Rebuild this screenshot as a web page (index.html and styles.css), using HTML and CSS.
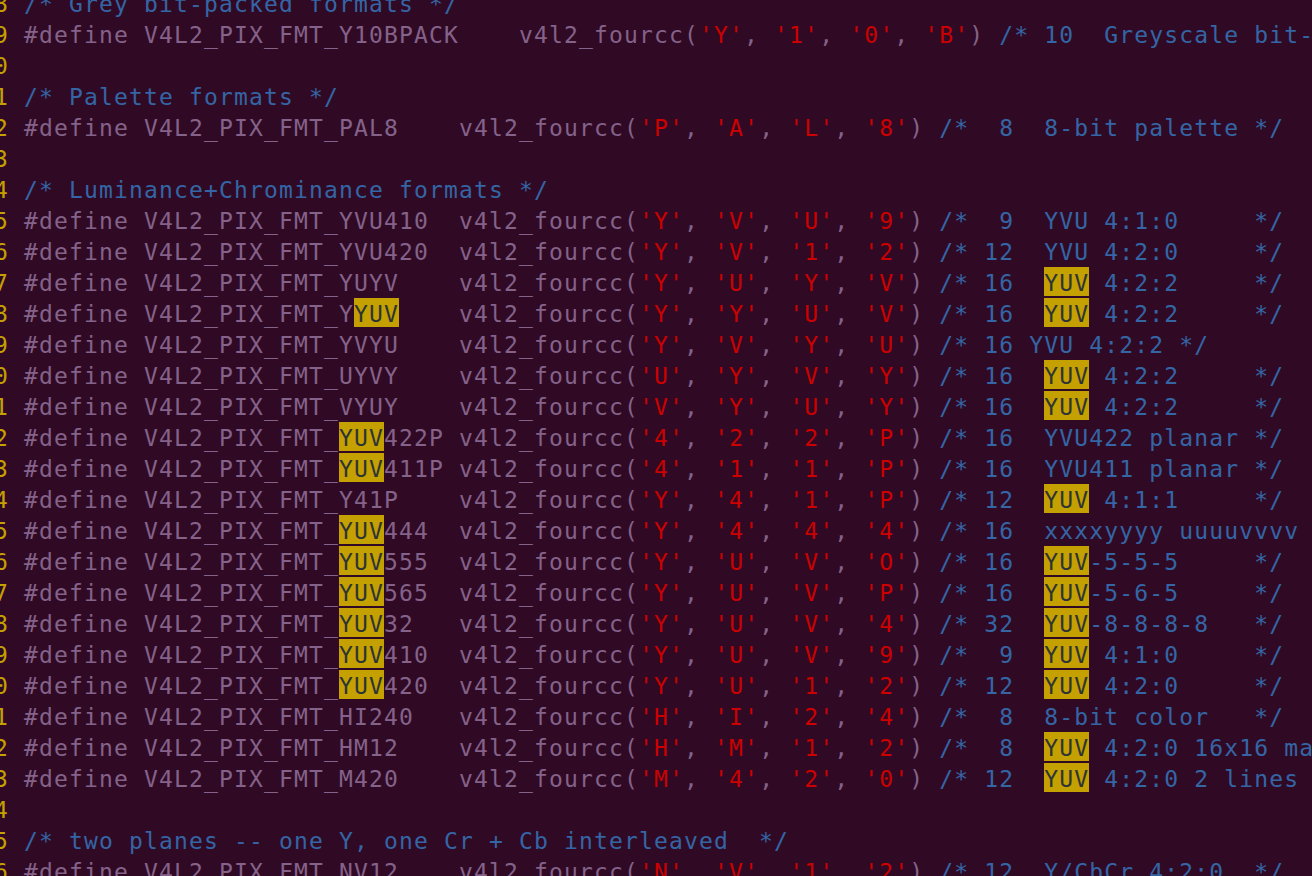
FILE: index.html
```html
<!DOCTYPE html>
<html>
<head>
<meta charset="utf-8">
<link rel="stylesheet" href="styles.css">
</head>
<body>
<main class="editor">
<div class="l"><span class="n">8</span> <span class="c">/* Grey bit-packed formats */</span></div>
<div class="l"><span class="n">9</span> #define V4L2_PIX_FMT_Y10BPACK    v4l2_fourcc(<span class="s">'Y'</span>, <span class="s">'1'</span>, <span class="s">'0'</span>, <span class="s">'B'</span>) <span class="c">/* 10  Greyscale bit-packed */</span></div>
<div class="l"><span class="n">0</span></div>
<div class="l"><span class="n">1</span> <span class="c">/* Palette formats */</span></div>
<div class="l"><span class="n">2</span> #define V4L2_PIX_FMT_PAL8    v4l2_fourcc(<span class="s">'P'</span>, <span class="s">'A'</span>, <span class="s">'L'</span>, <span class="s">'8'</span>) <span class="c">/*  8  8-bit palette */</span></div>
<div class="l"><span class="n">3</span></div>
<div class="l"><span class="n">4</span> <span class="c">/* Luminance+Chrominance formats */</span></div>
<div class="l"><span class="n">5</span> #define V4L2_PIX_FMT_YVU410  v4l2_fourcc(<span class="s">'Y'</span>, <span class="s">'V'</span>, <span class="s">'U'</span>, <span class="s">'9'</span>) <span class="c">/*  9  YVU 4:1:0     */</span></div>
<div class="l"><span class="n">6</span> #define V4L2_PIX_FMT_YVU420  v4l2_fourcc(<span class="s">'Y'</span>, <span class="s">'V'</span>, <span class="s">'1'</span>, <span class="s">'2'</span>) <span class="c">/* 12  YVU 4:2:0     */</span></div>
<div class="l"><span class="n">7</span> #define V4L2_PIX_FMT_YUYV    v4l2_fourcc(<span class="s">'Y'</span>, <span class="s">'U'</span>, <span class="s">'Y'</span>, <span class="s">'V'</span>) <span class="c">/* 16  <span class="h">YUV</span> 4:2:2     */</span></div>
<div class="l"><span class="n">8</span> #define V4L2_PIX_FMT_Y<span class="h">YUV</span>    v4l2_fourcc(<span class="s">'Y'</span>, <span class="s">'Y'</span>, <span class="s">'U'</span>, <span class="s">'V'</span>) <span class="c">/* 16  <span class="h">YUV</span> 4:2:2     */</span></div>
<div class="l"><span class="n">9</span> #define V4L2_PIX_FMT_YVYU    v4l2_fourcc(<span class="s">'Y'</span>, <span class="s">'V'</span>, <span class="s">'Y'</span>, <span class="s">'U'</span>) <span class="c">/* 16 YVU 4:2:2 */</span></div>
<div class="l"><span class="n">0</span> #define V4L2_PIX_FMT_UYVY    v4l2_fourcc(<span class="s">'U'</span>, <span class="s">'Y'</span>, <span class="s">'V'</span>, <span class="s">'Y'</span>) <span class="c">/* 16  <span class="h">YUV</span> 4:2:2     */</span></div>
<div class="l"><span class="n">1</span> #define V4L2_PIX_FMT_VYUY    v4l2_fourcc(<span class="s">'V'</span>, <span class="s">'Y'</span>, <span class="s">'U'</span>, <span class="s">'Y'</span>) <span class="c">/* 16  <span class="h">YUV</span> 4:2:2     */</span></div>
<div class="l"><span class="n">2</span> #define V4L2_PIX_FMT_<span class="h">YUV</span>422P v4l2_fourcc(<span class="s">'4'</span>, <span class="s">'2'</span>, <span class="s">'2'</span>, <span class="s">'P'</span>) <span class="c">/* 16  YVU422 planar */</span></div>
<div class="l"><span class="n">3</span> #define V4L2_PIX_FMT_<span class="h">YUV</span>411P v4l2_fourcc(<span class="s">'4'</span>, <span class="s">'1'</span>, <span class="s">'1'</span>, <span class="s">'P'</span>) <span class="c">/* 16  YVU411 planar */</span></div>
<div class="l"><span class="n">4</span> #define V4L2_PIX_FMT_Y41P    v4l2_fourcc(<span class="s">'Y'</span>, <span class="s">'4'</span>, <span class="s">'1'</span>, <span class="s">'P'</span>) <span class="c">/* 12  <span class="h">YUV</span> 4:1:1     */</span></div>
<div class="l"><span class="n">5</span> #define V4L2_PIX_FMT_<span class="h">YUV</span>444  v4l2_fourcc(<span class="s">'Y'</span>, <span class="s">'4'</span>, <span class="s">'4'</span>, <span class="s">'4'</span>) <span class="c">/* 16  xxxxyyyy uuuuvvvv */</span></div>
<div class="l"><span class="n">6</span> #define V4L2_PIX_FMT_<span class="h">YUV</span>555  v4l2_fourcc(<span class="s">'Y'</span>, <span class="s">'U'</span>, <span class="s">'V'</span>, <span class="s">'O'</span>) <span class="c">/* 16  <span class="h">YUV</span>-5-5-5     */</span></div>
<div class="l"><span class="n">7</span> #define V4L2_PIX_FMT_<span class="h">YUV</span>565  v4l2_fourcc(<span class="s">'Y'</span>, <span class="s">'U'</span>, <span class="s">'V'</span>, <span class="s">'P'</span>) <span class="c">/* 16  <span class="h">YUV</span>-5-6-5     */</span></div>
<div class="l"><span class="n">8</span> #define V4L2_PIX_FMT_<span class="h">YUV</span>32   v4l2_fourcc(<span class="s">'Y'</span>, <span class="s">'U'</span>, <span class="s">'V'</span>, <span class="s">'4'</span>) <span class="c">/* 32  <span class="h">YUV</span>-8-8-8-8   */</span></div>
<div class="l"><span class="n">9</span> #define V4L2_PIX_FMT_<span class="h">YUV</span>410  v4l2_fourcc(<span class="s">'Y'</span>, <span class="s">'U'</span>, <span class="s">'V'</span>, <span class="s">'9'</span>) <span class="c">/*  9  <span class="h">YUV</span> 4:1:0     */</span></div>
<div class="l"><span class="n">0</span> #define V4L2_PIX_FMT_<span class="h">YUV</span>420  v4l2_fourcc(<span class="s">'Y'</span>, <span class="s">'U'</span>, <span class="s">'1'</span>, <span class="s">'2'</span>) <span class="c">/* 12  <span class="h">YUV</span> 4:2:0     */</span></div>
<div class="l"><span class="n">1</span> #define V4L2_PIX_FMT_HI240   v4l2_fourcc(<span class="s">'H'</span>, <span class="s">'I'</span>, <span class="s">'2'</span>, <span class="s">'4'</span>) <span class="c">/*  8  8-bit color   */</span></div>
<div class="l"><span class="n">2</span> #define V4L2_PIX_FMT_HM12    v4l2_fourcc(<span class="s">'H'</span>, <span class="s">'M'</span>, <span class="s">'1'</span>, <span class="s">'2'</span>) <span class="c">/*  8  <span class="h">YUV</span> 4:2:0 16x16 macroblocks */</span></div>
<div class="l"><span class="n">3</span> #define V4L2_PIX_FMT_M420    v4l2_fourcc(<span class="s">'M'</span>, <span class="s">'4'</span>, <span class="s">'2'</span>, <span class="s">'0'</span>) <span class="c">/* 12  <span class="h">YUV</span> 4:2:0 2 lines y, 1 line uv interleaved */</span></div>
<div class="l"><span class="n">4</span></div>
<div class="l"><span class="n">5</span> <span class="c">/* two planes -- one Y, one Cr + Cb interleaved  */</span></div>
<div class="l"><span class="n">6</span> #define V4L2_PIX_FMT_NV12    v4l2_fourcc(<span class="s">'N'</span>, <span class="s">'V'</span>, <span class="s">'1'</span>, <span class="s">'2'</span>) <span class="c">/* 12  Y/CbCr 4:2:0  */</span></div>
</main>
</body>
</html>
```

FILE: styles.css
```css
html, body {
  margin: 0;
  padding: 0;
  background: #300a24;
  width: 1312px;
  height: 876px;
  overflow: hidden;
}

.editor {
  margin-top: -11px;
  margin-left: -6px;
  font-family: "DejaVu Sans Mono", "Liberation Mono", monospace;
  font-size: 23px;
  letter-spacing: 1.154px;
  line-height: 31px;
  color: #84628a;
}

.l {
  height: 31px;
  white-space: pre;
}

.n {
  color: #c4a000;
}

.s {
  color: #cc0000;
}

.c {
  color: #3465a4;
}

.h {
  background: #c4a000;
  color: #2e3436;
  padding-top: 3px;
}
```
